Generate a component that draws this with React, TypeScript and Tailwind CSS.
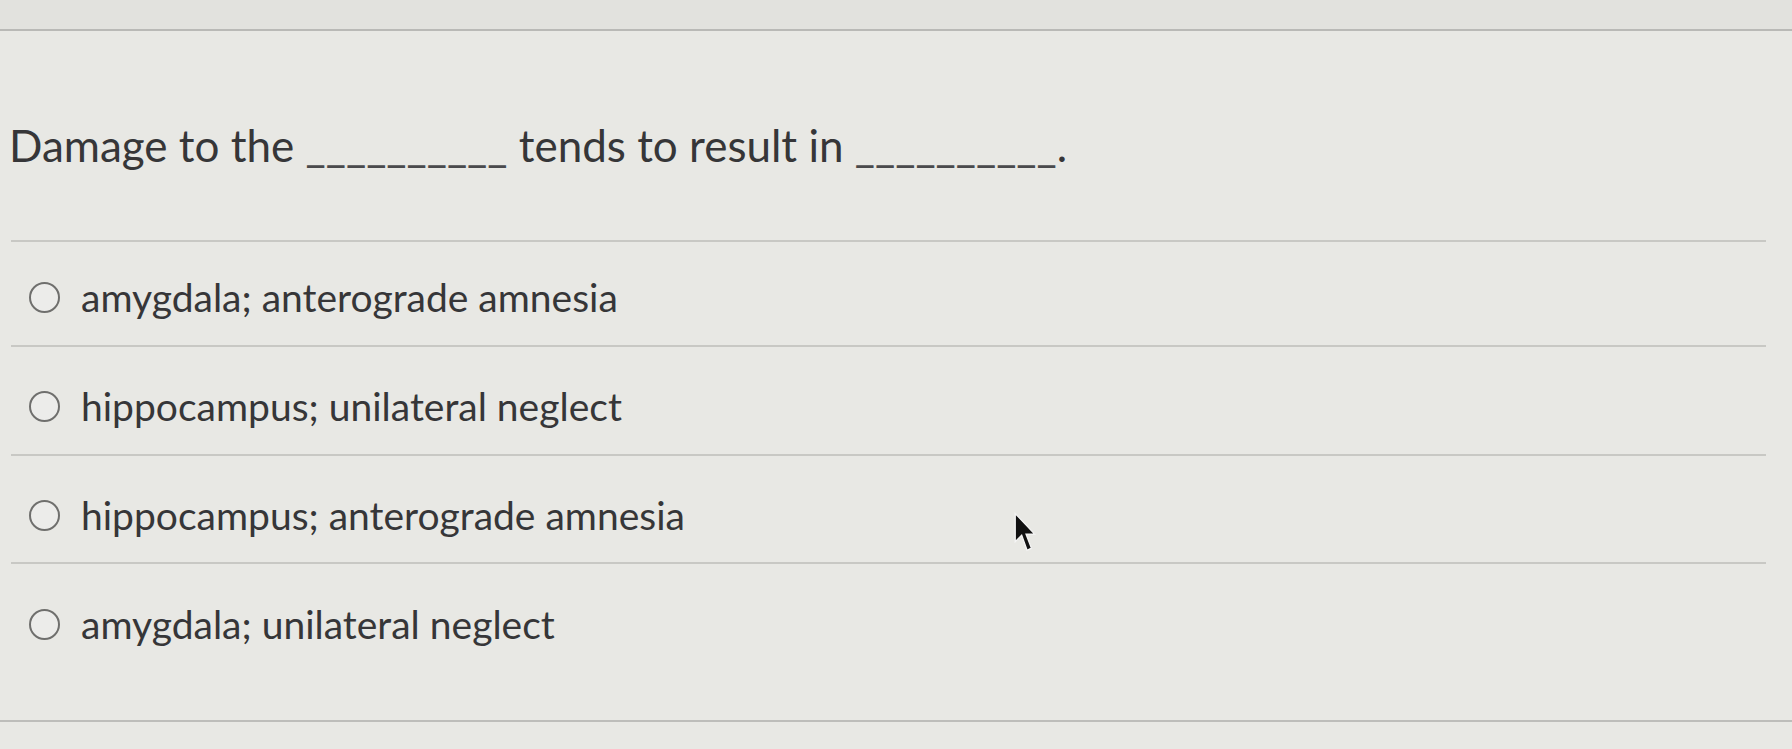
import React from "react";

const options = [
  { text: "amygdala; anterograde amnesia", h: "h-[105px]", pt: "pt-[8px]" },
  { text: "hippocampus; unilateral neglect", h: "h-[109px]", pt: "pt-[12px]" },
  { text: "hippocampus; anterograde amnesia", h: "h-[108px]", pt: "pt-[12px]" },
];

function Radio() {
  return (
    <span className="inline-block w-[31px] h-[31px] rounded-full border-[2.5px] border-[#6f6f6d] bg-[#ececea] shrink-0" />
  );
}

function Blank() {
  return <span className="text-[#4a4a4c]">__________</span>;
}

export default function App() {
  return (
    <div
      className="relative w-full h-[749px] overflow-hidden bg-[#e8e8e4] text-[#363638]"
      style={{ fontFamily: "Lato, 'Open Sans', sans-serif" }}
    >
      <div className="h-[31px] bg-[#e2e2de] border-b-[2px] border-[#b9b9b6]" />
      <div className="h-[209px] pl-[9px] pt-[92px]">
        <p className="text-[44px] leading-[44px]">
          Damage to the <Blank /> tends to result in <Blank />.
        </p>
      </div>
      <div className="ml-[11px] mr-[26px] border-t-[2px] border-[#c8c8c4]" />
      {options.map((o) => (
        <div key={o.text} className={`ml-[11px] mr-[26px] ${o.h} border-b-[2px] border-[#c8c8c4]`}>
          <div className={`flex items-center gap-[21px] pl-[18px] ${o.pt} h-full`}>
            <Radio />
            <span className="text-[39px] leading-[39px]">{o.text}</span>
          </div>
        </div>
      ))}
      <div className="ml-[11px] h-[156px] pt-[32px]">
        <div className="flex items-center gap-[21px] pl-[18px] h-[56px]">
          <Radio />
          <span className="text-[39px] leading-[39px]">amygdala; unilateral neglect</span>
        </div>
      </div>
      <div className="border-t-[2px] border-[#bdbdba]" />
      <svg
        className="absolute left-[1012px] top-[511px]"
        width="28"
        height="44"
        viewBox="0 0 26 40"
      >
        <path d="M3 2 L3 28 L9 22 L14 36 L18 34 L13 21 L21 21 Z" fill="#111" stroke="#f5f5f5" strokeWidth="1.2" />
      </svg>
    </div>
  );
}
